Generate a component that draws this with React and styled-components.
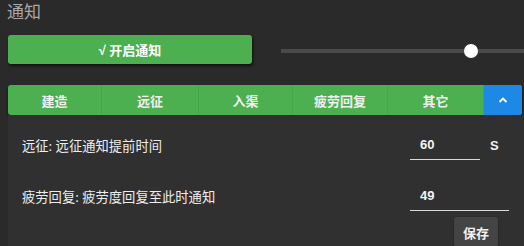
import React, { useState } from 'react';
import styled, { createGlobalStyle } from 'styled-components';

const GlobalStyle = createGlobalStyle`
    html, body {
        margin: 0;
        padding: 0;
        background: #2a2a2a;
    }
    body {
        font-family: "Noto Sans", "Noto Sans CJK SC", sans-serif;
    }
`;

const Page = styled.div`
    width: 524px;
    height: 246px;
    overflow: hidden;
    padding-left: 8px;
    box-sizing: border-box;
    background: #2a2a2a;
`;

const Title = styled.div`
    height: 35px;
    margin-left: -1px;
    font-size: 17px;
    line-height: 24px;
    color: #a8a8a8;
`;

const ToggleRow = styled.div`
    display: flex;
    align-items: center;
    gap: 29px;
    height: 29px;
`;

const ToggleButton = styled.button`
    width: 244px;
    height: 29px;
    border: none;
    border-radius: 3px;
    background: #4caf50;
    color: #fff;
    font-family: "Liberation Sans", "Noto Sans CJK SC", sans-serif;
    font-size: 13px;
    font-weight: bold;
    box-shadow: 1px 2px 3px rgba(0, 0, 0, 0.6);
    cursor: pointer;
    padding: 0;
`;

const Slider = styled.div`
    position: relative;
    flex: 1;
    height: 4px;
    background: #4a4a4a;
    margin-top: 2px;
`;

const Thumb = styled.div`
    position: absolute;
    top: 50%;
    width: 14px;
    height: 14px;
    border-radius: 50%;
    background: #fff;
    transform: translate(-50%, -50%);
`;

const Tabs = styled.div`
    display: flex;
    margin-top: 21px;
    width: 514px;
    height: 30px;
    border-radius: 3px;
    overflow: hidden;
    background: #4caf50;
    box-shadow: 0 2px 3px rgba(0, 0, 0, 0.5);
`;

const Tab = styled.div`
    flex: 0 0 ${p => p.w}px;
    display: flex;
    align-items: center;
    justify-content: center;
    color: #f0f0f0;
    font-size: 13px;
    font-weight: bold;
    border-right: 1px solid #47a54b;
    box-sizing: border-box;
    &:last-child {
        border-right: none;
    }
`;

const CollapseTab = styled.div`
    flex: 1;
    display: flex;
    align-items: center;
    justify-content: center;
    background: #1e88e5;
`;

const Panel = styled.div`
    background: #303030;
    height: 131px;
    padding: 15px 15px 0 14px;
    box-sizing: border-box;
`;

const Row = styled.div`
    display: flex;
    align-items: center;
    height: 30px;
    margin-bottom: ${p => p.mb || 0}px;
`;

const Label = styled.div`
    flex: 1;
    color: #eeeeee;
    font-size: 13.3px;
`;

const Field = styled.div`
    display: flex;
    align-items: center;
    width: 99px;
`;

const NumInput = styled.input`
    width: ${p => p.w}px;
    height: 29px;
    box-sizing: border-box;
    background: transparent;
    border: none;
    border-bottom: 1px solid #d8d8d8;
    outline: none;
    color: #f4f4f4;
    font-family: "Liberation Sans", Arial, sans-serif;
    font-size: 13px;
    font-weight: bold;
    padding: 0 0 0 10px;
`;

const Unit = styled.span`
    margin-left: 10px;
    color: #f0f0f0;
    font-family: "Liberation Sans", Arial, sans-serif;
    font-size: 13px;
    font-weight: bold;
`;

const SaveRow = styled.div`
    display: flex;
    justify-content: flex-end;
    margin-top: 6px;
    padding-right: 11px;
`;

const SaveButton = styled.button`
    width: 44px;
    height: 30px;
    border: none;
    border-radius: 3px;
    background: #444444;
    color: #f0f0f0;
    font-family: inherit;
    font-size: 13px;
    font-weight: bold;
    padding: 0;
    box-shadow: 0 1px 2px rgba(0, 0, 0, 0.4);
`;

const tabs = [
    { name: '建造', w: 94 },
    { name: '远征', w: 97 },
    { name: '入渠', w: 94 },
    { name: '疲劳回复', w: 95 },
    { name: '其它', w: 96 },
];

export default function App() {
    const [expedition, setExpedition] = useState('60');
    const [fatigue, setFatigue] = useState('49');

    return (
        <>
            <GlobalStyle />
            <Page>
                <Title>通知</Title>
                <ToggleRow>
                    <ToggleButton>√ 开启通知</ToggleButton>
                    <Slider>
                        <Thumb style={{ left: `${(190 / 243) * 100}%` }} />
                    </Slider>
                </ToggleRow>
                <Tabs>
                    {tabs.map(t => (
                        <Tab key={t.name} w={t.w}>{t.name}</Tab>
                    ))}
                    <CollapseTab>
                        <svg width="10" height="6" viewBox="0 0 10 6">
                            <path d="M1.5 5 L5 1.5 L8.5 5" fill="none" stroke="#fff" strokeWidth="1.8" />
                        </svg>
                    </CollapseTab>
                </Tabs>
                <Panel>
                    <Row mb={21}>
                        <Label>远征: 远征通知提前时间</Label>
                        <Field>
                            <NumInput w={70} value={expedition} onChange={e => setExpedition(e.target.value)} />
                            <Unit>S</Unit>
                        </Field>
                    </Row>
                    <Row>
                        <Label>疲劳回复: 疲劳度回复至此时通知</Label>
                        <Field>
                            <NumInput w={99} value={fatigue} onChange={e => setFatigue(e.target.value)} />
                        </Field>
                    </Row>
                    <SaveRow>
                        <SaveButton>保存</SaveButton>
                    </SaveRow>
                </Panel>
            </Page>
        </>
    );
}
